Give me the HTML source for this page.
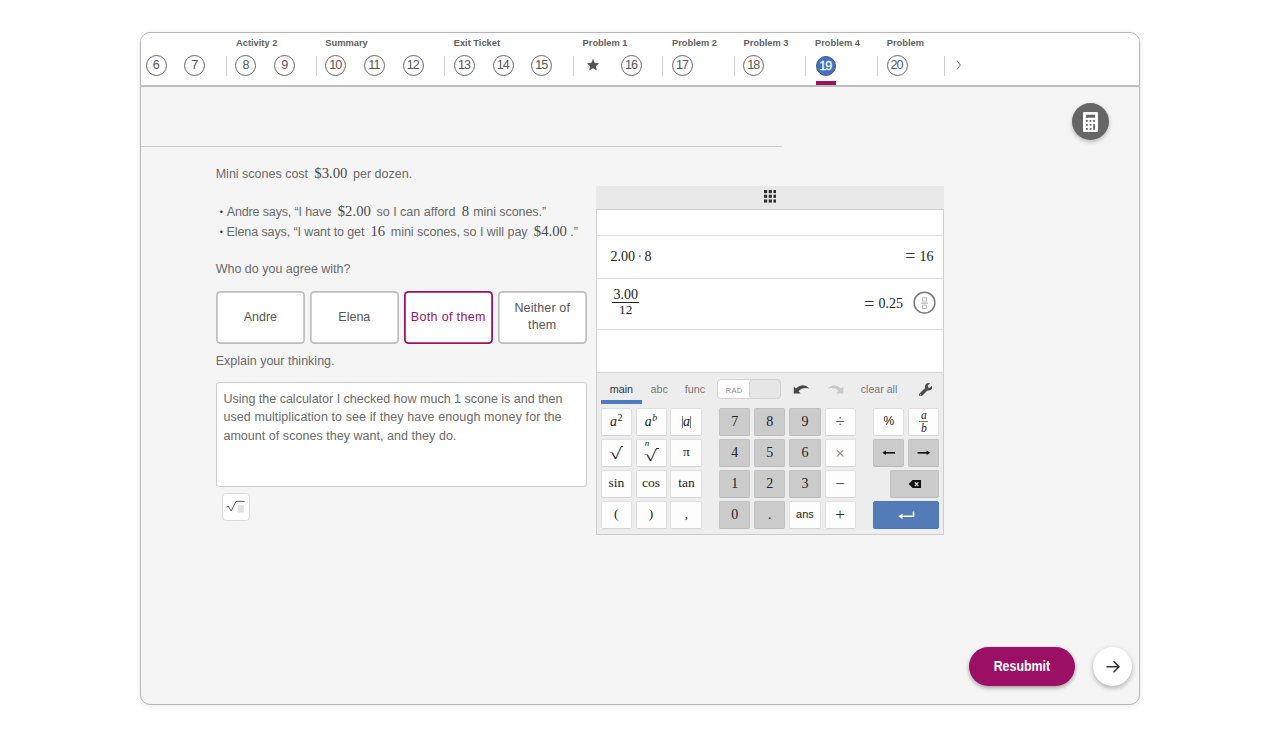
<!DOCTYPE html>
<html><head><meta charset="utf-8"><title>Problem 4</title>
<style>
html,body{margin:0;padding:0;background:#fff;}
body{width:1280px;height:735px;position:relative;overflow:hidden;font-family:"Liberation Sans",sans-serif;color:#555;}
.abs{position:absolute;}
#card{position:absolute;left:140px;top:32px;width:998px;height:671px;border:1px solid #b6b6b6;border-radius:10px;background:#f5f5f5;box-shadow:0 1px 7px rgba(0,0,0,.09);}
#hdr{position:absolute;left:141px;top:33px;width:998px;height:52px;background:#fff;border-bottom:2px solid #bdbdbd;border-radius:9px 9px 0 0;}
.lbl{position:absolute;top:36.500px;font-size:9.300px;font-weight:bold;color:#5e5e5e;white-space:nowrap;line-height:12px;}
.sep{position:absolute;top:56px;width:1px;height:20px;background:#d0d0d0;}
.c{position:absolute;top:55px;width:19px;height:19px;border:1px solid #666;border-radius:50%;font-size:12.6px;line-height:19px;text-align:center;color:#555;letter-spacing:-1px;text-indent:-1px;margin-left:-10.5px;box-sizing:content-box;}
.c.on{background:#4470c8;border-color:#4b5878;color:#fff;-webkit-text-stroke:.3px #fff;width:18px;height:18px;line-height:18px;margin-left:-10px;margin-top:.5px;}

.t{position:absolute;font-size:12.5px;line-height:20px;white-space:nowrap;color:#6a6a6a;}
.m{font-family:"Liberation Serif",serif;font-size:14.7px;line-height:1;color:#4a4a4a;margin:0 2.2px 0 2.8px;}
.bl{display:inline-block;width:4.400px;color:#333;font-size:9px;line-height:10px;vertical-align:1.200px;text-align:center;}
.ch{position:absolute;top:290.500px;width:89.200px;height:53.300px;border:0;box-shadow:inset 0 0 0 1.700px #bdbdbd;border-radius:4.500px;background:#fff;font-size:12.5px;color:#555;display:flex;align-items:center;justify-content:center;text-align:center;line-height:17px;box-sizing:content-box;}
.ch.sel{box-shadow:inset 0 0 0 1.800px #9d1164;color:#9d1164;}
#ta{position:absolute;left:216px;top:382.300px;width:369.300px;height:103px;border:1px solid #cecece;background:#fff;border-radius:3px;box-sizing:content-box;}
#ta div{position:absolute;left:6.400px;top:6.700px;font-size:12.500px;line-height:18.400px;color:#6a6a6a;white-space:nowrap;}
#mb{position:absolute;left:222.200px;top:493.300px;width:25.600px;height:25.400px;border:1px solid #dadada;border-radius:4px;background:#fff;}

#calc{position:absolute;left:596px;top:186px;width:348px;height:348px;}
#calc .bar{position:absolute;left:0;top:0;width:348px;height:24px;background:#e8e8e8;border-bottom:1px solid #cfcfcf;box-sizing:border-box;}
#calc .exp{position:absolute;left:0;top:24px;width:346px;height:162px;background:#fff;border-left:1px solid #cfcfcf;border-right:1px solid #cfcfcf;}
#calc .ln{position:absolute;left:1px;width:346px;height:1px;background:#dcdcdc;}
#calc .kp{position:absolute;left:0;top:186px;width:346px;height:161px;background:#ededed;border:1px solid #cdcdcd;border-top-color:#d8d8d8;}
.mx{position:absolute;font-family:"Liberation Serif",serif;font-size:14px;color:#222;white-space:nowrap;line-height:16px;}
.eq{display:inline-block;font-size:18px;line-height:16px;vertical-align:top;margin-right:4.200px;color:#333;position:relative;top:-.5px}
.k{position:absolute;width:29.200px;height:25.600px;border:1px solid #dedede;border-bottom-color:#d4d4d4;border-radius:2px;background:#fdfdfd;font-family:"Liberation Serif",serif;font-size:13.5px;color:#222;text-align:center;line-height:24px;box-sizing:content-box;white-space:nowrap;}
.k.d{background:#cbcbcb;border-color:#c1c1c1;border-bottom-color:#b9b9b9;}
.k.s{font-family:"Liberation Sans",sans-serif;font-size:11px;line-height:24px;}
.k.d{font-size:14px;line-height:25px;}
.k.o{font-size:17px;color:#555;line-height:25px;}
.k .va{font-size:14px;line-height:26px;display:inline-block;vertical-align:top;}
.k .sp{font-size:10px;display:inline-block;vertical-align:top;line-height:17px;margin-left:.5px;}
.k .rt{position:relative;font-size:20px;line-height:25px;display:inline-block;vertical-align:top;top:1.500px;left:-1.200px;transform:scale(1.12,.75);}
.k .rb{position:absolute;width:2.600px;height:1px;background:#333;}
.k .nn{position:absolute;left:8.300px;top:-1.500px;font-size:9px;line-height:9px;}
.k .vb{display:inline-block;vertical-align:top;width:1px;height:12px;margin-top:7px;background:#777;}

.k i{font-style:italic;}
.tab{position:absolute;top:196px;font-size:10.8px;line-height:14px;color:#777;white-space:nowrap;}
</style></head><body>
<div id="card"></div>
<div id="hdr"></div>
<div class="lbl" style="left:236px">Activity 2</div>
<div class="lbl" style="left:325.3px">Summary</div>
<div class="lbl" style="left:453.7px">Exit Ticket</div>
<div class="lbl" style="left:582.6px">Problem 1</div>
<div class="lbl" style="left:672px">Problem 2</div>
<div class="lbl" style="left:743.5px">Problem 3</div>
<div class="lbl" style="left:815px">Problem 4</div>
<div class="lbl" style="left:886.8px">Problem</div>
<div class="sep" style="left:226.0px"></div>
<div class="sep" style="left:315.9px"></div>
<div class="sep" style="left:443.8px"></div>
<div class="sep" style="left:572.5px"></div>
<div class="sep" style="left:662.3px"></div>
<div class="sep" style="left:733.5px"></div>
<div class="sep" style="left:805.3px"></div>
<div class="sep" style="left:877.0px"></div>
<div class="sep" style="left:944.0px"></div>
<div class="c" style="left:156.2px">6</div>
<div class="c" style="left:194.8px">7</div>
<div class="c" style="left:245.9px">8</div>
<div class="c" style="left:284.7px">9</div>
<div class="c" style="left:335.7px">10</div>
<div class="c" style="left:374.4px">11</div>
<div class="c" style="left:413.2px">12</div>
<div class="c" style="left:464.4px">13</div>
<div class="c" style="left:503.2px">14</div>
<div class="c" style="left:541.7px">15</div>
<div class="c" style="left:631.5px">16</div>
<div class="c" style="left:682.5px">17</div>
<div class="c" style="left:753.8px">18</div>
<div class="c on" style="left:825.8px">19</div>
<div class="c" style="left:897px">20</div>
<svg class="abs" style="left:585.900px;top:57.600px" width="14" height="14" viewBox="0 0 24 24"><path fill="#555" d="M12 1.5l3.1 7 7.4.7-5.6 5 1.7 7.4L12 17.7l-6.6 3.9 1.7-7.4-5.6-5 7.4-.7z"/></svg>
<div class="abs" style="left:815.800px;top:80.600px;width:20px;height:4.600px;background:#9c1065"></div>
<svg class="abs" style="left:954px;top:58px" width="10" height="14" viewBox="0 0 10 14"><path d="M3 2.500l3.300 4.500-3.300 4.500" fill="none" stroke="#777" stroke-width="1"/></svg>
<!--HDR-->

<div class="abs" style="left:141px;top:146.200px;width:641.300px;height:1.300px;background:#cdcdcd"></div>
<div class="t" style="left:215.7px;top:163.7px">Mini scones cost <span class="m">$3.00</span> per dozen.</div>
<div class="t" style="left:219.200px;top:201.900px"><span class="bl">&bull;</span><span style="letter-spacing:-.15px;margin-left:.6px"> Andre says, &ldquo;I have </span><span class="m">$2.00</span> so I can afford <span class="m" style="margin-right:.8px">8</span><span style="letter-spacing:-.07px"> mini scones.&rdquo;</span></div>
<div class="t" style="left:219.200px;top:221.800px"><span class="bl">&bull;</span><span style="letter-spacing:-.1px;margin-left:-.4px"> Elena says, &ldquo;I want to get </span><span class="m">16</span><span style="letter-spacing:-.03px"> mini scones, so I will pay </span><span class="m" style="margin-right:0">$4.00</span> .&rdquo;</div>
<div class="t" style="left:215.7px;top:259.1px">Who do you agree with?</div>
<div class="ch" style="left:215.80px">Andre</div>
<div class="ch" style="left:309.75px">Elena</div>
<div class="ch sel" style="left:403.70px"><span style="letter-spacing:.35px">Both of them</span></div>
<div class="ch" style="left:497.65px"><span style="letter-spacing:.15px">Neither of<br>them</span></div>
<div class="t" style="left:215.7px;top:350.5px">Explain your thinking.</div>
<div id="ta"><div>Using the calculator I checked how much 1 scone is and then<br><span style="letter-spacing:.09px">used multiplication to see if they have enough money for the</span><br><span style="letter-spacing:.04px">amount of scones they want, and they do.</span></div></div>
<div id="mb"><svg width="26" height="26" viewBox="0 0 26 26"><rect x="14.600" y="11.200" width="6.200" height="7.300" fill="#e0e0e0"/><path d="M3.600 12.900l1.700-.9 2.800 5 4.900-9.600h8.700" fill="none" stroke="#444" stroke-width=".9" stroke-linejoin="round"/></svg></div>
<!--BODY-->

<div id="calc">
 <div class="bar"><svg class="abs" style="left:167.700px;top:4.300px" width="12.600" height="12.600" viewBox="0 0 12 12"><rect x="0" y="0" width="3" height="3" fill="#2e2e2e"/><rect x="0" y="4.5" width="3" height="3" fill="#2e2e2e"/><rect x="0" y="9" width="3" height="3" fill="#2e2e2e"/><rect x="4.5" y="0" width="3" height="3" fill="#2e2e2e"/><rect x="4.5" y="4.5" width="3" height="3" fill="#2e2e2e"/><rect x="4.5" y="9" width="3" height="3" fill="#2e2e2e"/><rect x="9" y="0" width="3" height="3" fill="#2e2e2e"/><rect x="9" y="4.5" width="3" height="3" fill="#2e2e2e"/><rect x="9" y="9" width="3" height="3" fill="#2e2e2e"/></svg></div>
 <div class="exp"></div>
 <div class="ln" style="top:49px"></div><div class="ln" style="top:92px"></div><div class="ln" style="top:143px"></div>
 <div class="mx" style="left:14.5px;top:62.5px">2.00<span style="margin:0 2.400px;color:#555">&middot;</span>8</div>
 <div class="mx" style="right:10.500px;top:62.500px"><span class="eq">=</span>16</div>
 <div class="mx" style="left:17.400px;top:100.900px;font-size:14px">3.00</div>
 <div class="abs" style="left:16px;top:116px;width:27px;height:1px;background:#222"></div>
 <div class="mx" style="left:23px;top:116px;font-size:13.3px">12</div>
 <div class="mx" style="right:41px;top:110.300px"><span class="eq">=</span>0.25</div>
 <svg class="abs" style="left:316px;top:103.500px" width="25" height="25" viewBox="0 0 25 25"><circle cx="12.500" cy="12.700" r="10.400" fill="#fff" stroke="#7c7c7c" stroke-width="1.500"/><rect x="10.500" y="7.800" width="4" height="3.300" fill="none" stroke="#b4b4b4" stroke-width=".9"/><path d="M9.400 13.100h6.400" stroke="#999" stroke-width=".9"/><rect x="10.500" y="15.100" width="4" height="3.300" fill="none" stroke="#b4b4b4" stroke-width=".9"/></svg>
 <div class="kp"></div>
 <div class="tab" style="left:13.7px;color:#333">main</div>
 <div class="tab" style="left:54.6px">abc</div>
 <div class="tab" style="left:88.8px">func</div>
 <div class="abs" style="left:5px;top:214.2px;width:40.5px;height:3.4px;background:#4a7cc4"></div>
 <div class="abs" style="left:120.700px;top:192.700px;width:62px;height:18px;border:1px solid #d2d2d2;border-radius:4px;background:#fff;font-size:7.500px;color:#8c8c8c;line-height:21.500px"><span style="position:absolute;left:8px;letter-spacing:.3px">RAD</span><span class="abs" style="left:31px;top:-1px;width:30px;height:18px;background:#e6e6e6;border:1px solid #d2d2d2;border-radius:4px"></span></div>
 <svg class="abs" style="left:197.200px;top:198.200px" width="18" height="11" viewBox="0 0 18 11"><path d="M.75 2.400v7.100h7l-2.200-2.200q3.600-4.300 11-2.800q-6.500-6.600-13.700 0z" fill="#464646"/></svg>
 <svg class="abs" style="left:229.700px;top:198.200px" width="18" height="11" viewBox="0 0 18 11"><path d="M17.250 2.400v7.100h-7l2.200-2.200q-3.600-4.300-11-2.800q6.500-6.600 13.700 0z" fill="#c9c9c9"/></svg>
 <div class="tab" style="left:264.8px;font-size:10.6px">clear all</div>
 <svg class="abs" style="left:322.700px;top:196.700px" width="13.500" height="13.500" viewBox="0 0 512 512"><path fill="#4c4c4c" d="M507.730 109.100c-2.240-9.030-13.540-12.090-20.120-5.510l-74.360 74.360-67.880-11.310-11.310-67.880 74.360-74.360c6.620-6.620 3.430-17.900-5.660-20.160-47.380-11.740-99.550.91-136.580 37.930-39.640 39.640-50.550 97.100-34.050 147.200L18.740 402.760c-24.990 24.990-24.990 65.510 0 90.500 24.990 24.990 65.510 24.990 90.500 0l213.210-213.210c50.120 16.710 107.470 5.680 147.370-34.220 37.070-37.070 49.700-89.320 37.910-136.730zM64 472c-13.250 0-24-10.750-24-24 0-13.260 10.750-24 24-24s24 10.740 24 24c0 13.250-10.750 24-24 24z"/></svg>
<!--KEYS-->
 <div class="k" style="left:4.7px;top:222.4px;"><i class="va">a</i><span class="sp">2</span></div>
 <div class="k" style="left:39.5px;top:222.4px;"><i class="va">a</i><span class="sp"><i>b</i></span></div>
 <div class="k" style="left:74.4px;top:222.4px;width:30px;"><span class="vb"></span><i class="va">a</i><span class="vb"></span></div>
 <div class="k" style="left:4.7px;top:253.4px;"><span class="rt">&radic;</span><span class="rb" style="left:19.200px;top:6px"></span></div>
 <div class="k" style="left:39.5px;top:253.4px;"><span class="rt" style="top:3.500px;left:-.7px">&radic;</span><span class="rb" style="left:19.700px;top:8px"></span><i class="nn">n</i></div>
 <div class="k" style="left:74.4px;top:253.4px;width:30px;line-height:24px;">&pi;</div>
 <div class="k" style="left:4.7px;top:284.4px;">sin</div>
 <div class="k" style="left:39.5px;top:284.4px;">cos</div>
 <div class="k" style="left:74.4px;top:284.4px;width:30px;">tan</div>
 <div class="k" style="left:4.7px;top:315.4px;">(</div>
 <div class="k" style="left:39.5px;top:315.4px;">)</div>
 <div class="k" style="left:74.4px;top:315.4px;width:30px;">,</div>
 <div class="k d" style="left:123.1px;top:222.4px;">7</div>
 <div class="k d" style="left:158.1px;top:222.4px;">8</div>
 <div class="k d" style="left:193.4px;top:222.4px;">9</div>
 <div class="k d" style="left:123.1px;top:253.4px;">4</div>
 <div class="k d" style="left:158.1px;top:253.4px;">5</div>
 <div class="k d" style="left:193.4px;top:253.4px;">6</div>
 <div class="k d" style="left:123.1px;top:284.4px;">1</div>
 <div class="k d" style="left:158.1px;top:284.4px;">2</div>
 <div class="k d" style="left:193.4px;top:284.4px;">3</div>
 <div class="k d" style="left:123.1px;top:315.4px;">0</div>
 <div class="k d" style="left:158.1px;top:315.4px;">.</div>
 <div class="k s" style="left:193.4px;top:315.4px;">ans</div>
 <div class="k o" style="left:228.5px;top:222.4px;color:#555;">&divide;</div>
 <div class="k o" style="left:228.5px;top:253.4px;line-height:27px;color:#777;">&times;</div>
 <div class="k o" style="left:228.5px;top:284.4px;color:#2a2a2a;">&minus;</div>
 <div class="k o" style="left:228.5px;top:315.4px;line-height:25px;color:#2a2a2a;">+</div>
 <div class="k s" style="left:277.2px;top:222.4px;font-size:12px;">%</div>
 <div class="k" style="left:312.3px;top:222.4px;"><span style="position:absolute;left:0;top:1px;width:29px;line-height:10px;font-size:11.500px"><i>a</i></span><span style="position:absolute;left:10px;top:11.800px;width:9px;height:1px;background:#777"></span><span style="position:absolute;left:0;top:13.500px;width:29px;line-height:10px;font-size:11.500px"><i>b</i></span></div>
 <div class="k d" style="left:277.2px;top:253.4px;"><svg width="29" height="25" viewBox="0 0 29 25"><path d="M10 12.800h11" stroke="#111" stroke-width="1.600" fill="none"/><path d="M8.300 12.800l3.600-2.300v4.600z" fill="#111"/></svg></div>
 <div class="k d" style="left:312.3px;top:253.4px;"><svg width="29" height="25" viewBox="0 0 29 25"><path d="M8.500 12.800h11" stroke="#111" stroke-width="1.600" fill="none"/><path d="M21.200 12.800l-3.600-2.300v4.600z" fill="#111"/></svg></div>
 <div class="k d" style="left:294.3px;top:284.4px;width:47px;"><svg width="47" height="25" viewBox="0 0 47 25"><path d="M17.700 13.100l4-4h8.300v8h-8.300z" fill="#111"/><path d="M23.800 11.300l3.600 3.600m0-3.600l-3.600 3.600" stroke="#cbcbcb" stroke-width="1.400" fill="none"/></svg></div>
 <div class="k" style="left:277.2px;top:315.4px;width:64px;background:#527bb8;border-color:#4f77b3"><svg width="64" height="25" viewBox="0 0 64 25"><path d="M39.500 9.500v4.800h-12.500" stroke="#fff" stroke-width="1.500" fill="none"/><path d="M24.500 14.300l4-2.600v5.200z" fill="#fff"/></svg></div>
<!--/KEYS-->
</div>
<!--CALC-->

<div class="abs" style="left:969px;top:647px;width:105.5px;height:39px;border-radius:20px;background:#9b1064;box-shadow:0 2px 4px rgba(0,0,0,.35);color:#fff;font-weight:bold;font-size:14px;line-height:39.500px;text-align:center"><span style="display:inline-block;transform:scaleX(.885)">Resubmit</span></div>
<div class="abs" style="left:1093px;top:647px;width:39px;height:39px;border-radius:50%;background:#fff;box-shadow:0 2px 5px rgba(0,0,0,.3)"><svg width="39" height="39" viewBox="0 0 39 39"><path d="M13.500 19.700h12.500M20.500 14.200l5.500 5.500-5.500 5.500" fill="none" stroke="#333" stroke-width="1.500"/></svg></div>
<div class="abs" style="left:1072px;top:103px;width:37px;height:37px;border-radius:50%;background:#666;box-shadow:0 2px 4px rgba(0,0,0,.25)"><svg class="abs" style="left:11px;top:8.900px" width="15" height="20" viewBox="0 0 15 20"><rect x="0" y="0" width="15" height="20" rx="1" fill="#fff"/><rect x="3" y="2.700" width="9" height="3" fill="#666"/><g fill="#666"><rect x="3" y="8" width="1.800" height="1.800"/><rect x="6.600" y="8" width="1.800" height="1.800"/><rect x="10.200" y="8" width="1.800" height="1.800"/><rect x="3" y="12" width="1.800" height="1.800"/><rect x="6.600" y="12" width="1.800" height="1.800"/><rect x="3" y="16" width="1.800" height="1.800"/><rect x="6.600" y="16" width="1.800" height="1.800"/><rect x="10.200" y="12" width="1.800" height="5.800"/></g></svg></div>
<!--FOOT-->
</body></html>
